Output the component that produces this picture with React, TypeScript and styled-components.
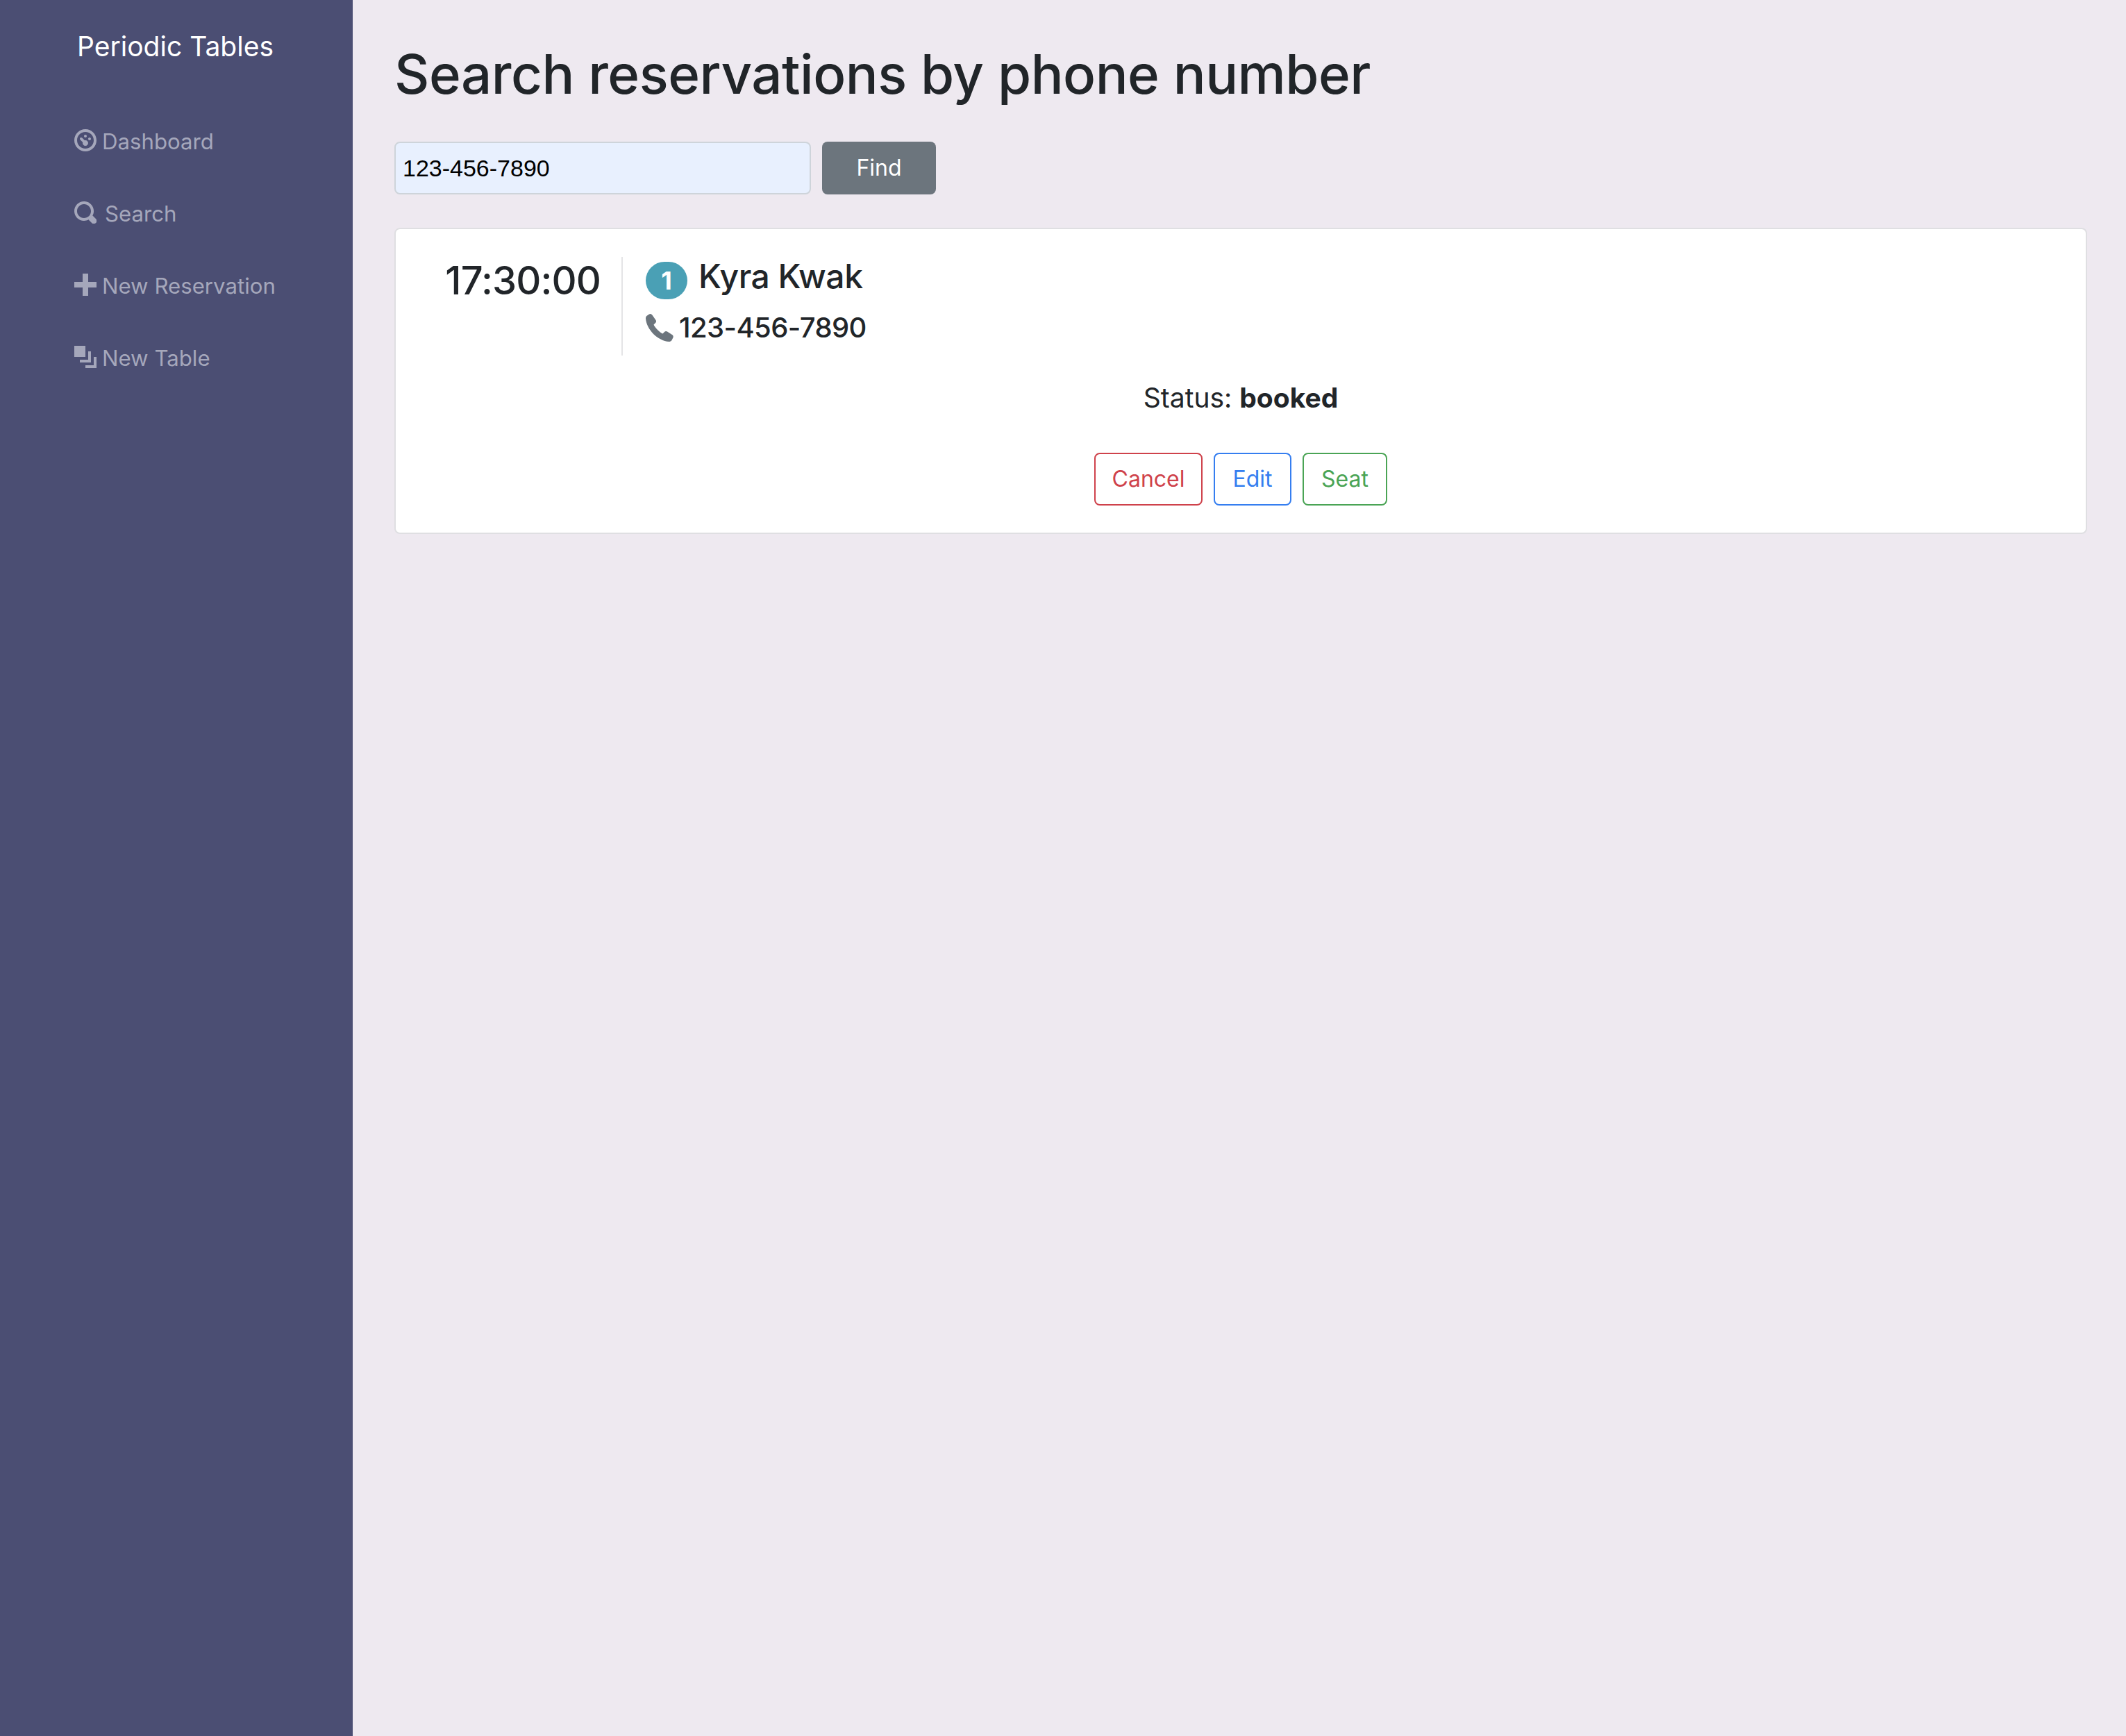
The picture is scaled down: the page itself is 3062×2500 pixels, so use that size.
import styled, { createGlobalStyle } from "styled-components";

const GlobalStyle = createGlobalStyle`
  * {
    box-sizing: border-box;
  }
  body {
    margin: 0;
    background: #eee9f0;
    color: #212529;
    font-family: Inter, "Noto Sans", sans-serif;
    font-size: 32px;
    line-height: 1.5;
  }
`;

const Page = styled.div`
  display: flex;
  min-height: 100vh;
`;

const Sidebar = styled.aside`
  flex: 0 0 508px;
  background: #4b4e73;
  padding: 40px 0 0 107px;
`;

const Brand = styled.div`
  margin: 0 0 86px 4px;
  color: #fff;
  font-size: 39px;
  line-height: 54px;
`;

const NavList = styled.nav`
  display: flex;
  flex-direction: column;
  gap: 56px;
`;

const NavItem = styled.a<{ $gap?: number }>`
  display: flex;
  align-items: center;
  gap: ${(props) => props.$gap ?? 8}px;
  height: 48px;
  color: #a5a7bb;
  font-size: 31.2px;
`;

const NavIcon = styled.svg`
  flex: none;
  width: 32px;
  height: 32px;
  fill: #a5a7bb;
  position: relative;
  top: -2px;
`;

const Main = styled.main`
  flex: 1;
  min-width: 0;
  padding: 59px 56px 0 60px;
`;

const Title = styled.h1`
  margin: 0 0 49px;
  font-size: 78px;
  font-weight: 500;
  letter-spacing: -0.5px;
  line-height: 96px;
`;

const SearchRow = styled.form`
  display: flex;
  gap: 16px;
  margin-bottom: 48px;
`;

const PhoneInput = styled.input`
  width: 600px;
  height: 76px;
  padding: 0 10px;
  border: 2px solid #ced4da;
  border-radius: 8px;
  background: #e8f0fe;
  color: #000;
  font-family: "Liberation Sans", Arial, sans-serif;
  font-size: 34px;
`;

const FindButton = styled.button`
  width: 164px;
  height: 76px;
  padding: 0 0 2px;
  border: 0;
  border-radius: 8px;
  background: #6c757d;
  color: #fff;
  font-family: inherit;
  font-size: 32px;
`;

const Card = styled.section`
  background: #fff;
  border: 2px solid #dfdfe2;
  border-radius: 8px;
  padding: 40px 0 39px;
`;

const ReservationRow = styled.div`
  display: flex;
  height: 142px;
`;

const TimeCell = styled.div`
  width: 327px;
  padding-right: 30px;
  border-right: 2px solid #e4e4e6;
  font-size: 56px;
  font-weight: 500;
  letter-spacing: -0.9px;
  line-height: 68px;
  text-align: right;
`;

const GuestCell = styled.div`
  padding-left: 33px;
`;

const GuestName = styled.div`
  display: flex;
  align-items: flex-start;
  gap: 16px;
  font-size: 48px;
  font-weight: 500;
  letter-spacing: -0.5px;
  line-height: 56px;
`;

const PartyBadge = styled.span`
  flex: none;
  width: 60px;
  height: 54px;
  margin-top: 7px;
  border-radius: 27px;
  background: #4aa0b5;
  color: #fff;
  font-size: 36px;
  font-weight: 700;
  letter-spacing: 0;
  line-height: 54px;
  text-align: center;
`;

const PhoneLine = styled.div`
  display: flex;
  align-items: center;
  gap: 8px;
  margin-top: 17px;
  font-size: 40px;
  font-weight: 500;
  letter-spacing: -0.6px;
  line-height: 48px;
`;

const PhoneIcon = styled.svg`
  flex: none;
  width: 40px;
  height: 40px;
  fill: #6c757d;
`;

const Status = styled.p`
  margin: 37px 0 0;
  font-size: 39px;
  line-height: 48px;
  text-align: center;
`;

const Actions = styled.div`
  display: flex;
  justify-content: center;
  gap: 16px;
  margin-top: 55px;
`;

const ActionButton = styled.button<{ $color: string; $width: number }>`
  width: ${(props) => props.$width}px;
  height: 76px;
  padding: 0 0 2px;
  border: 2px solid ${(props) => props.$color};
  border-radius: 8px;
  background: #fff;
  color: ${(props) => props.$color};
  font-family: inherit;
  font-size: 32px;
`;

function App() {
  return (
    <>
      <GlobalStyle />
      <Page>
        <Sidebar>
          <Brand>Periodic Tables</Brand>
          <NavList>
            <NavItem>
              <NavIcon viewBox="0 0 8 8">
                <path d="M4 0c-2.2 0-4 1.8-4 4s1.8 4 4 4 4-1.8 4-4-1.8-4-4-4zm0 1c1.66 0 3 1.34 3 3s-1.34 3-3 3-3-1.34-3-3 1.34-3 3-3zm0 1c-.28 0-.5.22-.5.5s.22.5.5.5.5-.22.5-.5-.22-.5-.5-.5zm-1.66 1a.5.5 0 0 0-.19.84l.91.91c-.02.08-.06.16-.06.25 0 .55.45 1 1 1s1-.45 1-1-.45-1-1-1c-.09 0-.17.04-.25.06l-.91-.91a.5.5 0 0 0-.44-.16.5.5 0 0 0-.06 0zm3.16 0c-.28 0-.5.22-.5.5s.22.5.5.5.5-.22.5-.5-.22-.5-.5-.5z" />
              </NavIcon>
              Dashboard
            </NavItem>
            <NavItem $gap={12}>
              <NavIcon viewBox="0 0 8 8">
                <path d="M3.5 0c-1.93 0-3.5 1.57-3.5 3.5s1.57 3.5 3.5 3.5c.59 0 1.17-.14 1.66-.41a1 1 0 0 0 .13.13l1 1a1.02 1.02 0 1 0 1.44-1.44l-1-1a1 1 0 0 0-.16-.13c.27-.49.44-1.06.44-1.66 0-1.93-1.57-3.5-3.5-3.5zm0 1c1.39 0 2.5 1.11 2.5 2.5 0 .66-.24 1.27-.66 1.72-.01.01-.02.02-.03.03a1 1 0 0 0-.13.13c-.44.4-1.04.63-1.69.63-1.39 0-2.5-1.11-2.5-2.5s1.11-2.5 2.5-2.5z" />
              </NavIcon>
              Search
            </NavItem>
            <NavItem>
              <NavIcon viewBox="0 0 8 8">
                <path d="M3 0v3h-3v2h3v3h2v-3h3v-2h-3v-3h-2z" />
              </NavIcon>
              New Reservation
            </NavItem>
            <NavItem>
              <NavIcon viewBox="0 0 8 8">
                <path d="M0 0v4h4v-4h-4zm5 2v3h-3v1h4v-4h-1zm2 2v3h-3v1h4v-4h-1z" />
              </NavIcon>
              New Table
            </NavItem>
          </NavList>
        </Sidebar>
        <Main>
          <Title>Search reservations by phone number</Title>
          <SearchRow>
            <PhoneInput defaultValue="123-456-7890" />
            <FindButton type="button">Find</FindButton>
          </SearchRow>
          <Card>
            <ReservationRow>
              <TimeCell>17:30:00</TimeCell>
              <GuestCell>
                <GuestName>
                  <PartyBadge>1</PartyBadge>
                  Kyra Kwak
                </GuestName>
                <PhoneLine>
                  <PhoneIcon viewBox="0 0 8 8">
                    <path d="M1.3 0C1.6 0 1.8.2 2 .5L2.9 1.8C3.1 2.1 3 2.4 2.8 2.6L2.3 3.1C2.6 3.9 4.1 5.4 4.9 5.7L5.4 5.2C5.6 5 5.9 4.9 6.2 5.1L7.6 6C7.9 6.2 8 6.5 7.9 6.8L7.5 7.6C7.3 7.9 7 8 6.7 8C3.5 7.8.2 4.5 0 1.3C0 1 .1.7.4.5L1 .1Z" />
                  </PhoneIcon>
                  123-456-7890
                </PhoneLine>
              </GuestCell>
            </ReservationRow>
            <Status>
              Status: <strong>booked</strong>
            </Status>
            <Actions>
              <ActionButton $color="#cf424b" $width={156}>Cancel</ActionButton>
              <ActionButton $color="#357ef0" $width={112}>Edit</ActionButton>
              <ActionButton $color="#4aa455" $width={122}>Seat</ActionButton>
            </Actions>
          </Card>
        </Main>
      </Page>
    </>
  );
}

export default App;
